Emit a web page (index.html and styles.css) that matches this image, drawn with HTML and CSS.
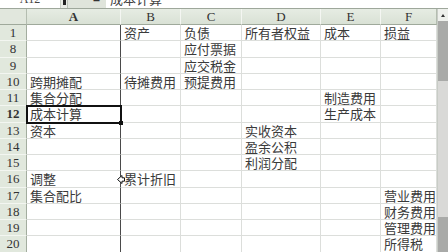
FILE: index.html
```html
<!DOCTYPE html>
<html lang="zh-CN">
<head>
<meta charset="utf-8">
<title>Sheet</title>
<link rel="stylesheet" href="styles.css">
</head>
<body>
<div class="app">
  <div class="formula">
    <div class="namebox"><span class="clip">A12</span></div>
    <div class="dropbtn"><span class="droparrow"></span></div>
    <div class="fxzone"><span class="clip eq">=</span></div>
    <div class="fxtext"><span class="clip">成本计算</span></div>
  </div>
  <div class="main">
    <div class="grid">
      <div class="corner"></div>
      <div class="ch sel">A</div><div class="ch">B</div><div class="ch">C</div><div class="ch">D</div><div class="ch">E</div><div class="ch last">F</div>

      <div class="rh">1</div><div class="c ca"></div><div class="c">资产</div><div class="c">负债</div><div class="c">所有者权益</div><div class="c">成本</div><div class="c">损益</div>
      <div class="rh">8</div><div class="c ca"></div><div class="c"></div><div class="c">应付票据</div><div class="c"></div><div class="c"></div><div class="c"></div>
      <div class="rh">9</div><div class="c ca"></div><div class="c"></div><div class="c">应交税金</div><div class="c"></div><div class="c"></div><div class="c"></div>
      <div class="rh">10</div><div class="c ca">跨期摊配</div><div class="c">待摊费用</div><div class="c">预提费用</div><div class="c"></div><div class="c"></div><div class="c"></div>
      <div class="rh">11</div><div class="c ca">集合分配</div><div class="c"></div><div class="c"></div><div class="c"></div><div class="c">制造费用</div><div class="c"></div>
      <div class="rh sel">12</div><div class="c ca active">成本计算<span class="handle"></span></div><div class="c"></div><div class="c"></div><div class="c"></div><div class="c">生产成本</div><div class="c"></div>
      <div class="rh">13</div><div class="c ca">资本</div><div class="c"></div><div class="c"></div><div class="c">实收资本</div><div class="c"></div><div class="c"></div>
      <div class="rh">14</div><div class="c ca"></div><div class="c"></div><div class="c"></div><div class="c">盈余公积</div><div class="c"></div><div class="c"></div>
      <div class="rh">15</div><div class="c ca"></div><div class="c"></div><div class="c"></div><div class="c">利润分配</div><div class="c"></div><div class="c"></div>
      <div class="rh">16</div><div class="c ca">调整</div><div class="c cur">累计折旧<svg class="cursor" width="8" height="9" viewBox="0 0 8 9"><path d="M0.5 4.5 L5 0.5 L5 2.8 L7.5 2.8 L7.5 6.2 L5 6.2 L5 8.5 Z" fill="#fff" stroke="#111" stroke-width="1"/></svg></div><div class="c"></div><div class="c"></div><div class="c"></div><div class="c"></div>
      <div class="rh">17</div><div class="c ca">集合配比</div><div class="c"></div><div class="c"></div><div class="c"></div><div class="c"></div><div class="c">营业费用</div>
      <div class="rh">18</div><div class="c ca"></div><div class="c"></div><div class="c"></div><div class="c"></div><div class="c"></div><div class="c">财务费用</div>
      <div class="rh">19</div><div class="c ca"></div><div class="c"></div><div class="c"></div><div class="c"></div><div class="c"></div><div class="c">管理费用</div>
      <div class="rh">20</div><div class="c ca"></div><div class="c"></div><div class="c"></div><div class="c"></div><div class="c"></div><div class="c">所得税</div>
    </div>
    <div class="vscroll">
      <div class="sbtn"><span class="uparrow"></span></div>
      <div class="track-dark top"></div>
      <div class="track-light"></div>
      <div class="track-dark bottom"></div>
    </div>
  </div>
</div>
</body>
</html>
```

FILE: styles.css
```css
* { box-sizing: border-box; }
html, body { margin: 0; padding: 0; background: #fff; }
body { width: 448px; height: 252px; overflow: hidden; }

.app { width: 448px; height: 252px; display: flex; flex-direction: column; }

.formula {
  height: 9px;
  flex: 0 0 9px;
  display: flex;
  overflow: hidden;
  border-bottom: 1px solid #9ea79b;
  background: #fff;
}
.clip {
  display: block;
  margin-top: -9px;
  line-height: 16px;
  white-space: nowrap;
}
.namebox {
  width: 61px;
  font: 12px "Liberation Serif", serif;
  color: #444;
  text-align: center;
  border-right: 1px solid #c9cfc6;
}
.dropbtn {
  width: 7px;
  background: #e9ece6;
  border-right: 1px solid #b9c0b6;
  display: flex;
  justify-content: center;
}
.droparrow {
  display: block;
  width: 3px;
  height: 5px;
  background: #222;
}
.fxzone {
  width: 38px;
  background: #dfe4db;
  text-align: right;
  padding-right: 6px;
  font: bold 12px "Liberation Sans", sans-serif;
  color: #333;
}
.fxtext {
  flex: 1;
  padding-left: 4px;
  font: 13px "Noto Sans CJK SC", sans-serif;
  color: #444;
}

.main { flex: 1; display: flex; min-height: 0; }

.grid {
  width: 437px;
  display: grid;
  grid-template-columns: 27px 94px 60px 61px 79px 60px 56px;
  grid-template-rows: 16px repeat(14, 16.25px);
  overflow: hidden;
}

.corner {
  background: #e1e7dd;
  border-right: 1px solid #b4bdb0;
  border-bottom: 1px solid #9fa99b;
}
.ch {
  background: linear-gradient(#e6ece3, #d9e1d5);
  border-right: 1px solid #f4f6f2;
  border-bottom: 1px solid #9fa99b;
  font: 13px/15px "Liberation Serif", serif;
  color: #333;
  text-align: center;
}
.ch.sel { font-weight: bold; }
.ch.last { border-right: 1px solid #b4bdb0; }

.rh {
  background: #e1e8dd;
  border-right: 1px solid #a3ad9f;
  border-bottom: 1px solid #f3f6f1;
  font: 13px/15px "Liberation Serif", serif;
  color: #333;
  text-align: center;
  display: flex;
  align-items: center;
  justify-content: center;
}
.rh.sel { font-weight: bold; }

.c {
  position: relative;
  border-right: 1px solid #dcdedb;
  border-bottom: 1px solid #dcdedb;
  padding-left: 3px;
  font: 13px/15px "Noto Sans CJK SC", sans-serif;
  color: #3a3a3a;
  white-space: nowrap;
  display: flex;
  align-items: center;
}
.c.ca { border-right: 1px solid #4a4a4a; }
.c.active {
  outline: 2px solid #111;
  outline-offset: -1px;
  z-index: 2;
}
.handle {
  position: absolute;
  right: -3px;
  bottom: -3px;
  width: 4px;
  height: 4px;
  background: #111;
}
.cursor {
  position: absolute;
  left: -4px;
  top: 4px;
}

.vscroll {
  width: 11px;
  display: flex;
  flex-direction: column;
  background: #d8d8d6;
  border-left: 1px solid #c8ccc6;
}
.sbtn {
  height: 12px;
  flex: 0 0 12px;
  background: #eef0ec;
  display: flex;
  justify-content: center;
  align-items: center;
}
.uparrow {
  width: 0;
  height: 0;
  border-left: 2px solid transparent;
  border-right: 2px solid transparent;
  border-bottom: 3px solid #333;
}
.track-dark { background: #a9aaa8; }
.track-dark.top { height: 60px; flex: 0 0 60px; }
.track-light { flex: 1; background: #d9d9d7; }
.track-dark.bottom { height: 35px; flex: 0 0 35px; }
```
